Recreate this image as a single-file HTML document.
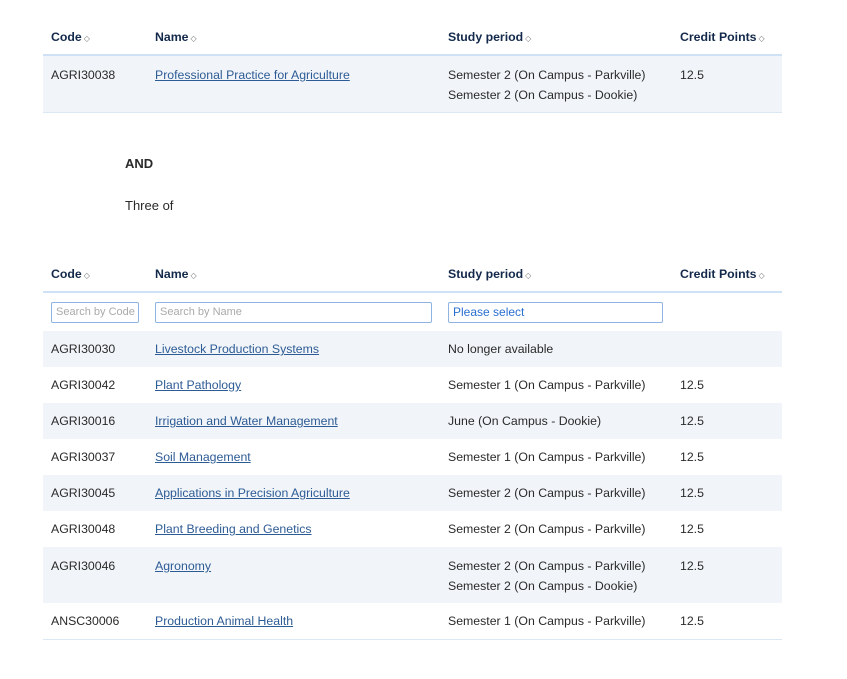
<!DOCTYPE html>
<html><head><style>
body{margin:0;width:847px;height:679px;background:#fff;font-family:"Liberation Sans",sans-serif;font-size:12.3px;color:#2a2a2a;position:relative;overflow:hidden}
.a{position:absolute;white-space:nowrap;line-height:20px}
.h{font-weight:bold;color:#13294b}
.s{font-size:8px;color:#777;margin-left:2px;font-weight:normal}
a{color:#2d5b95;text-decoration:underline}
.bg{position:absolute;left:43px;width:739px;background:#f1f5f9}
.ln{position:absolute;left:43px;width:739px;height:1px;background:#dbe7f3}
.hl{position:absolute;left:43px;width:739px;height:2px;background:#cfe2f5}
.in{position:absolute;top:302px;height:19px;border:1px solid #8fb4e3;border-radius:2px;font-size:11px;line-height:19px;padding-left:4px;color:#aaa;box-sizing:border-box;height:21px}
</style></head><body>
<div class="a h" style="left:51px;top:27px">Code<span class="s">◇</span></div>
<div class="a h" style="left:155px;top:27px">Name<span class="s">◇</span></div>
<div class="a h" style="left:448px;top:27px">Study period<span class="s">◇</span></div>
<div class="a h" style="left:680px;top:27px">Credit Points<span class="s">◇</span></div>
<div class="hl" style="top:54px"></div>
<div class="bg" style="top:56px;height:56px"></div>
<div class="ln" style="top:112px"></div>
<div class="a" style="left:51px;top:65px">AGRI30038</div>
<div class="a" style="left:155px;top:65px"><a>Professional Practice for Agriculture</a></div>
<div class="a" style="left:448px;top:65px">Semester 2 (On Campus - Parkville)<br>Semester 2 (On Campus - Dookie)</div>
<div class="a" style="left:680px;top:65px">12.5</div>
<div class="a" style="left:125px;top:154px;font-weight:bold;font-size:13px">AND</div>
<div class="a" style="left:125px;top:196px;font-size:13px">Three of</div>
<div class="a h" style="left:51px;top:264px">Code<span class="s">◇</span></div>
<div class="a h" style="left:155px;top:264px">Name<span class="s">◇</span></div>
<div class="a h" style="left:448px;top:264px">Study period<span class="s">◇</span></div>
<div class="a h" style="left:680px;top:264px">Credit Points<span class="s">◇</span></div>
<div class="hl" style="top:291px"></div>
<div class="in" style="left:51px;width:88px">Search by Code</div>
<div class="in" style="left:155px;width:277px">Search by Name</div>
<div class="in" style="left:448px;width:215px;color:#2a6fd0;font-size:12px">Please select</div>
<div class="bg" style="top:331px;height:36px"></div>
<div class="bg" style="top:403px;height:36px"></div>
<div class="bg" style="top:475px;height:36px"></div>
<div class="bg" style="top:547px;height:56px"></div>
<div class="ln" style="top:639px"></div>
<div class="a" style="left:51px;top:339px">AGRI30030</div><div class="a" style="left:155px;top:339px"><a>Livestock Production Systems</a></div><div class="a" style="left:448px;top:339px">No longer available</div>
<div class="a" style="left:51px;top:375px">AGRI30042</div><div class="a" style="left:155px;top:375px"><a>Plant Pathology</a></div><div class="a" style="left:448px;top:375px">Semester 1 (On Campus - Parkville)</div><div class="a" style="left:680px;top:375px">12.5</div>
<div class="a" style="left:51px;top:411px">AGRI30016</div><div class="a" style="left:155px;top:411px"><a>Irrigation and Water Management</a></div><div class="a" style="left:448px;top:411px">June (On Campus - Dookie)</div><div class="a" style="left:680px;top:411px">12.5</div>
<div class="a" style="left:51px;top:447px">AGRI30037</div><div class="a" style="left:155px;top:447px"><a>Soil Management</a></div><div class="a" style="left:448px;top:447px">Semester 1 (On Campus - Parkville)</div><div class="a" style="left:680px;top:447px">12.5</div>
<div class="a" style="left:51px;top:483px">AGRI30045</div><div class="a" style="left:155px;top:483px"><a>Applications in Precision Agriculture</a></div><div class="a" style="left:448px;top:483px">Semester 2 (On Campus - Parkville)</div><div class="a" style="left:680px;top:483px">12.5</div>
<div class="a" style="left:51px;top:519px">AGRI30048</div><div class="a" style="left:155px;top:519px"><a>Plant Breeding and Genetics</a></div><div class="a" style="left:448px;top:519px">Semester 2 (On Campus - Parkville)</div><div class="a" style="left:680px;top:519px">12.5</div>
<div class="a" style="left:51px;top:556px">AGRI30046</div><div class="a" style="left:155px;top:556px"><a>Agronomy</a></div><div class="a" style="left:448px;top:556px">Semester 2 (On Campus - Parkville)<br>Semester 2 (On Campus - Dookie)</div><div class="a" style="left:680px;top:556px">12.5</div>
<div class="a" style="left:51px;top:611px">ANSC30006</div><div class="a" style="left:155px;top:611px"><a>Production Animal Health</a></div><div class="a" style="left:448px;top:611px">Semester 1 (On Campus - Parkville)</div><div class="a" style="left:680px;top:611px">12.5</div>
</body></html>
